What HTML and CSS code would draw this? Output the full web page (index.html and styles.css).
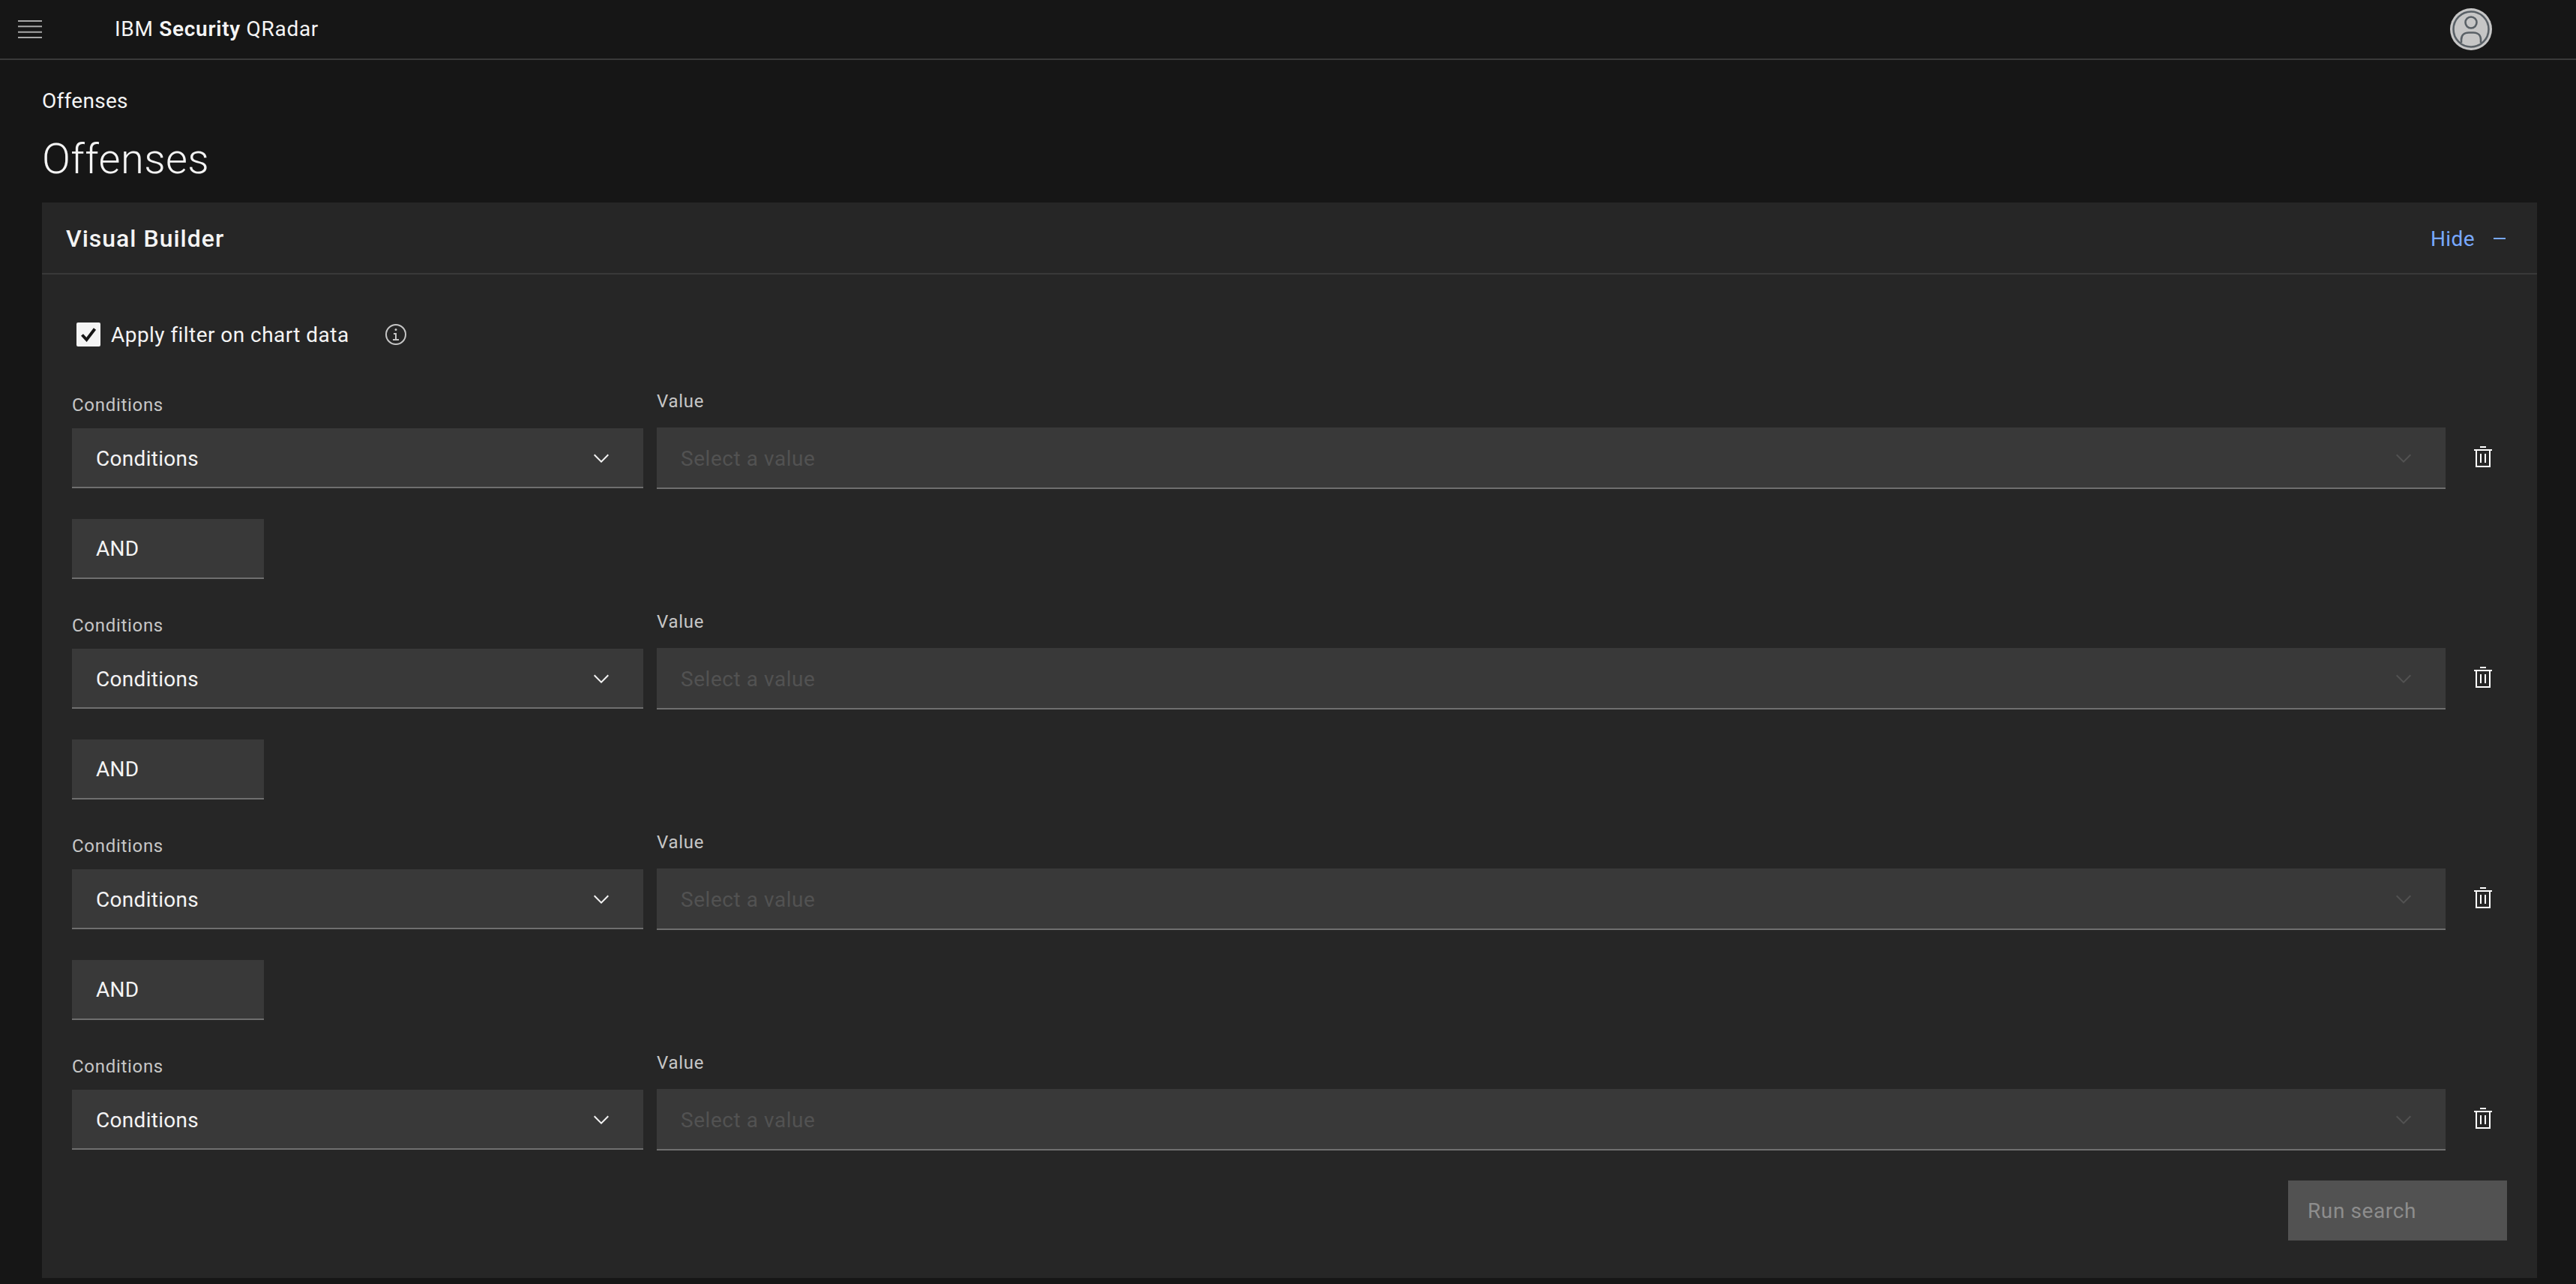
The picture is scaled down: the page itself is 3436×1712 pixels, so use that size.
FILE: index.html
```html
<!DOCTYPE html>
<html lang="en">
<head>
<meta charset="utf-8">
<title>IBM Security QRadar - Offenses</title>
<link rel="stylesheet" href="styles.css">
</head>
<body>
<header class="topbar">
  <svg class="burger" viewBox="0 0 32 24"><path d="M0 0H32V2H0zM0 7.3H32V9.3H0zM0 14.7H32V16.7H0zM0 22H32V24H0z"/></svg>
  <div class="brand">IBM <b>Security</b> QRadar</div>
  <svg class="avatar" viewBox="0 0 56 56"><circle class="avatar-bg" cx="28" cy="28" r="28"/><circle class="avatar-line" cx="28" cy="28" r="23.5"/><circle class="avatar-line" cx="28" cy="19" r="7.5"/><path class="avatar-line" d="M15 46V42C15 36 19 32.500 25 32.500H31C37 32.500 41 36 41 42V46"/></svg>
</header>
<main class="page">
  <div class="crumb">Offenses</div>
  <h1 class="title">Offenses</h1>
  <section class="card">
    <div class="card-head">
      <h2 class="card-title">Visual Builder</h2>
      <div class="toggle">Hide <svg class="ic" viewBox="0 0 32 32"><path d="M8 15H24V17H8z"/></svg></div>
    </div>
    <div class="card-body">
      <div class="apply">
        <span class="check"><svg viewBox="0 0 32 32"><path d="M7.500 16.500L13.500 23L24.500 8.500"/></svg></span>
        <span class="apply-label">Apply filter on chart data</span>
        <svg class="ic info" viewBox="0 0 32 32"><path d="M17 22V14H13V16H15V22H12V24H20V22z"/><path d="M16 8a1.500 1.500 0 1 0 1.500 1.500A1.500 1.500 0 0 0 16 8z"/><path d="M16 30A14 14 0 1 1 30 16A14 14 0 0 1 16 30zM16 4A12 12 0 1 0 28 16A12 12 0 0 0 16 4z"/></svg>
      </div>

      <div class="row">
        <div class="field cond"><div class="lbl">Conditions</div><div class="sel"><span>Conditions</span><svg class="ic" viewBox="0 0 32 32"><path d="M16 22L6 12L7.400 10.600L16 19.200L24.600 10.600L26 12z"/></svg></div></div>
        <div class="field val"><div class="lbl">Value</div><div class="sel off"><span>Select a value</span><svg class="ic" viewBox="0 0 32 32"><path d="M16 22L6 12L7.400 10.600L16 19.200L24.600 10.600L26 12z"/></svg></div></div>
        <svg class="ic trash" viewBox="0 0 32 32"><path d="M12 12H14V24H12zM18 12H20V24H18z"/><path d="M4 6V8H6V30H26V8H28V6zM8 28V8H24V28z"/><path d="M12 2H20V4H12z"/></svg>
      </div>
      <div class="and">AND</div>

      <div class="row">
        <div class="field cond"><div class="lbl">Conditions</div><div class="sel"><span>Conditions</span><svg class="ic" viewBox="0 0 32 32"><path d="M16 22L6 12L7.400 10.600L16 19.200L24.600 10.600L26 12z"/></svg></div></div>
        <div class="field val"><div class="lbl">Value</div><div class="sel off"><span>Select a value</span><svg class="ic" viewBox="0 0 32 32"><path d="M16 22L6 12L7.400 10.600L16 19.200L24.600 10.600L26 12z"/></svg></div></div>
        <svg class="ic trash" viewBox="0 0 32 32"><path d="M12 12H14V24H12zM18 12H20V24H18z"/><path d="M4 6V8H6V30H26V8H28V6zM8 28V8H24V28z"/><path d="M12 2H20V4H12z"/></svg>
      </div>
      <div class="and">AND</div>

      <div class="row">
        <div class="field cond"><div class="lbl">Conditions</div><div class="sel"><span>Conditions</span><svg class="ic" viewBox="0 0 32 32"><path d="M16 22L6 12L7.400 10.600L16 19.200L24.600 10.600L26 12z"/></svg></div></div>
        <div class="field val"><div class="lbl">Value</div><div class="sel off"><span>Select a value</span><svg class="ic" viewBox="0 0 32 32"><path d="M16 22L6 12L7.400 10.600L16 19.200L24.600 10.600L26 12z"/></svg></div></div>
        <svg class="ic trash" viewBox="0 0 32 32"><path d="M12 12H14V24H12zM18 12H20V24H18z"/><path d="M4 6V8H6V30H26V8H28V6zM8 28V8H24V28z"/><path d="M12 2H20V4H12z"/></svg>
      </div>
      <div class="and">AND</div>

      <div class="row">
        <div class="field cond"><div class="lbl">Conditions</div><div class="sel"><span>Conditions</span><svg class="ic" viewBox="0 0 32 32"><path d="M16 22L6 12L7.400 10.600L16 19.200L24.600 10.600L26 12z"/></svg></div></div>
        <div class="field val"><div class="lbl">Value</div><div class="sel off"><span>Select a value</span><svg class="ic" viewBox="0 0 32 32"><path d="M16 22L6 12L7.400 10.600L16 19.200L24.600 10.600L26 12z"/></svg></div></div>
        <svg class="ic trash" viewBox="0 0 32 32"><path d="M12 12H14V24H12zM18 12H20V24H18z"/><path d="M4 6V8H6V30H26V8H28V6zM8 28V8H24V28z"/><path d="M12 2H20V4H12z"/></svg>
      </div>

      <div class="actions"><div class="run">Run search</div></div>
    </div>
  </section>
</main>
</body>
</html>
```

FILE: styles.css
```css
* { box-sizing: border-box; }
html, body { margin: 0; padding: 0; }
body {
  background: #161616;
  color: #f4f4f4;
  font-family: "Roboto", "Liberation Sans", sans-serif;
  font-size: 28px;
  height: 1712px;
  overflow: hidden;
}
.ic { width: 32px; height: 32px; flex: none; fill: currentColor; display: block; }

.topbar {
  display: flex;
  align-items: center;
  height: 80px;
  border-bottom: 2px solid #393939;
  padding: 0 112px 0 24px;
}
.burger { width: 32px; height: 24px; fill: #a8a8a8; flex: none; }
.brand { margin-left: 97px; letter-spacing: 0.7px; line-height: 40px; }
.brand b { font-weight: 600; }
.avatar { width: 56px; height: 56px; margin-left: auto; flex: none; }
.avatar-bg { fill: #c6c6c6; }
.avatar-line { fill: none; stroke: #596066; stroke-width: 2.6; }

.page { padding: 35px 52px 8px 56px; }
.crumb { line-height: 40px; letter-spacing: 0.3px; }
.title { margin: 21px 0 22px; font-size: 56px; line-height: 72px; font-weight: 300; letter-spacing: 0.4px; }

.card { background: #262626; padding-bottom: 50px; }
.card-head {
  display: flex;
  align-items: center;
  justify-content: space-between;
  height: 96px;
  border-bottom: 2px solid #393939;
  padding: 2px 34px 0 32px;
}
.card-title { margin: 0; font-size: 32px; font-weight: 500; letter-spacing: 1px; }
.toggle { display: flex; align-items: center; gap: 17px; color: #78a9ff; letter-spacing: 0.4px; }

.card-body { padding: 64px 40px 0; }
.apply { display: flex; align-items: center; height: 32px; margin: 0 0 57px 6px; }
.check {
  width: 32px; height: 32px;
  background: #f4f4f4;
  border-radius: 2px;
  display: block;
  flex: none;
}
.check svg { display: block; width: 32px; height: 32px; fill: none; stroke: #161616; stroke-width: 4; }
.apply-label { margin-left: 14px; letter-spacing: 0.45px; }
.info { margin-left: 46px; color: #c6c6c6; }

.row { display: flex; align-items: flex-end; }
.lbl { font-size: 24px; line-height: 32px; color: #c6c6c6; letter-spacing: 0.7px; }
.cond { width: 762px; margin-bottom: 1px; }
.cond .lbl { margin-bottom: 15px; }
.val { flex: 1; margin-left: 18px; }
.val .lbl { margin-bottom: 19px; }
.sel {
  display: flex;
  align-items: center;
  justify-content: space-between;
  height: 80px;
  background: #393939;
  border-bottom: 2px solid #6f6f6f;
  padding: 2px 40px 0 32px;
  letter-spacing: 0.3px;
}
.val .sel { height: 82px; letter-spacing: 0.55px; }
.off { color: #525252; }
.trash { margin: 0 16px 27px 34px; color: #fff; }

.and {
  display: flex;
  align-items: center;
  width: 256px;
  height: 80px;
  margin: 40px 0 41px;
  padding-left: 32px;
  background: #393939;
  border-bottom: 2px solid #6f6f6f;
  letter-spacing: 0.3px;
}
.actions { display: flex; justify-content: flex-end; margin-top: 40px; }
.run {
  display: flex;
  align-items: center;
  width: 292px;
  height: 80px;
  padding-left: 26px;
  background: #525252;
  color: #8d8d8d;
  letter-spacing: 0.6px;
}
```
